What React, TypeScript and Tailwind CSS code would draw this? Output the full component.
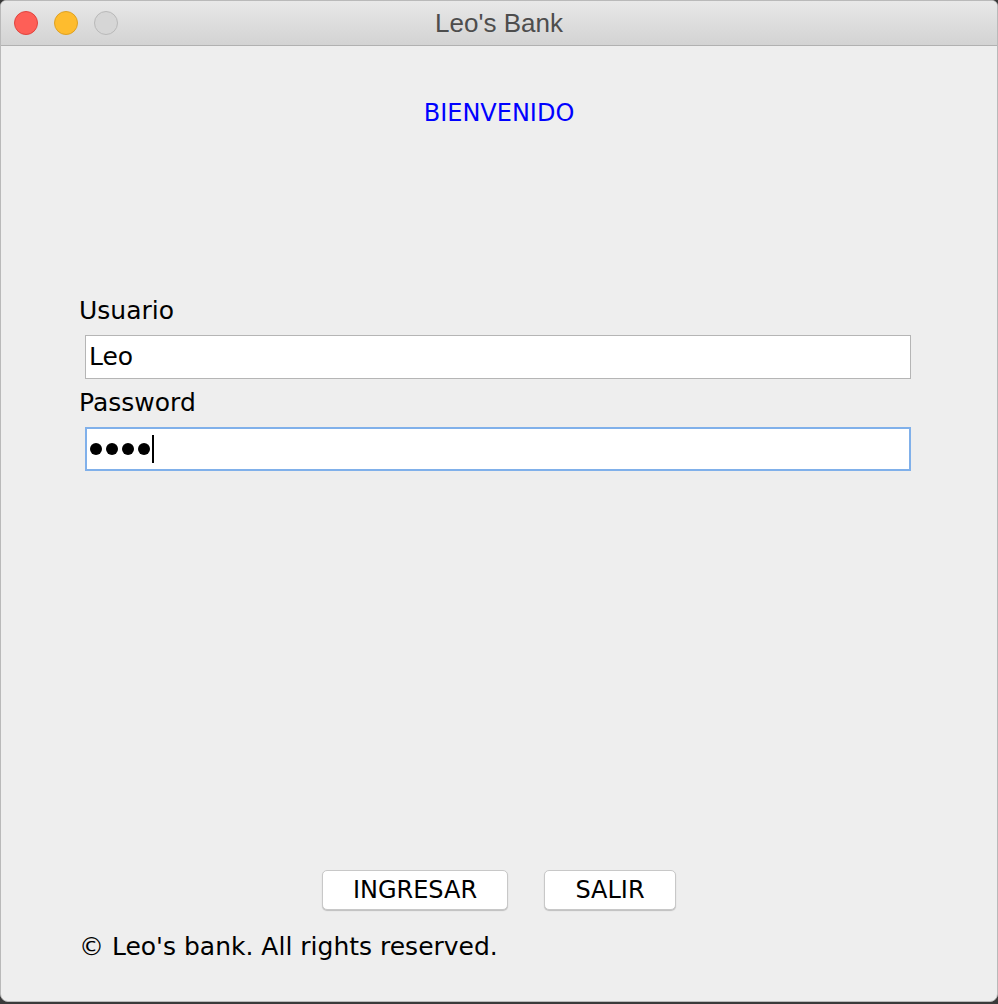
import React from "react";

const font = { fontFamily: '"DejaVu Sans", "Lucida Grande", sans-serif' };

export default function App() {
  return (
    <div className="w-[998px] h-[1004px] bg-[#3a3a3a] overflow-hidden">
      <div className="h-[1002px] flex flex-col bg-[#eeeeee] rounded-b-[8px] rounded-t-[6px] overflow-hidden border border-[#b9b9b9]">
        {/* title bar */}
        <div className="relative h-[45px] shrink-0 flex items-center justify-center bg-gradient-to-b from-[#e8e8e8] to-[#d3d3d3] border-b border-[#b1b1b1]">
          <div className="absolute left-[13px] top-[10px] flex gap-[16px]">
            <span className="w-[24px] h-[24px] rounded-full bg-[#fe5f57] border border-[#e0443e]" />
            <span className="w-[24px] h-[24px] rounded-full bg-[#febc2e] border border-[#dea123]" />
            <span className="w-[24px] h-[24px] rounded-full bg-[#d6d6d6] border border-[#b9b9b9]" />
          </div>
          <span
            className="text-[26px] leading-[30px] text-[#4d4d4d]"
            style={{ fontFamily: '"Liberation Sans", Arial, sans-serif' }}
          >
            Leo&apos;s Bank
          </span>
        </div>

        {/* content */}
        <div className="flex-1 flex flex-col text-black" style={font}>
          <div className="pt-[52px] text-center text-[24px] leading-[30px] text-[#0000ff]">BIENVENIDO</div>

          <div className="mt-[168px] px-[78px] flex flex-col">
            <label className="text-[25px] leading-[30px]">Usuario</label>
            <div className="mt-[9px] ml-[6px] mr-[8px] h-[44px] bg-white border border-[#b5b5b5] flex items-center px-[3px] text-[25px]">
              Leo
            </div>
            <label className="mt-[9px] text-[25px] leading-[30px]">Password</label>
            <div className="mt-[9px] ml-[6px] mr-[8px] h-[44px] bg-white border-2 border-[#80b0ea] flex items-center pl-[3px] gap-[4px]">
              <span className="w-[12px] h-[12px] rounded-full bg-black" />
              <span className="w-[12px] h-[12px] rounded-full bg-black" />
              <span className="w-[12px] h-[12px] rounded-full bg-black" />
              <span className="w-[12px] h-[12px] rounded-full bg-black" />
              <span className="w-[2px] h-[28px] bg-black -ml-[2px]" />
            </div>
          </div>

          <div className="flex-1" />

          <div className="flex justify-center gap-[36px]">
            <button className="w-[186px] h-[40px] bg-white rounded-[5px] border border-[#c8c8c8] shadow-[0_1px_1px_rgba(0,0,0,0.2)] text-[24px] leading-[30px]">
              INGRESAR
            </button>
            <button className="w-[132px] h-[40px] bg-white rounded-[5px] border border-[#c8c8c8] shadow-[0_1px_1px_rgba(0,0,0,0.2)] text-[24px] leading-[30px]">
              SALIR
            </button>
          </div>
          <div className="mt-[22px] mb-[39px] pl-[78px] text-[25px] leading-[30px]">
            © Leo&apos;s bank. All rights reserved.
          </div>
        </div>
      </div>
    </div>
  );
}
